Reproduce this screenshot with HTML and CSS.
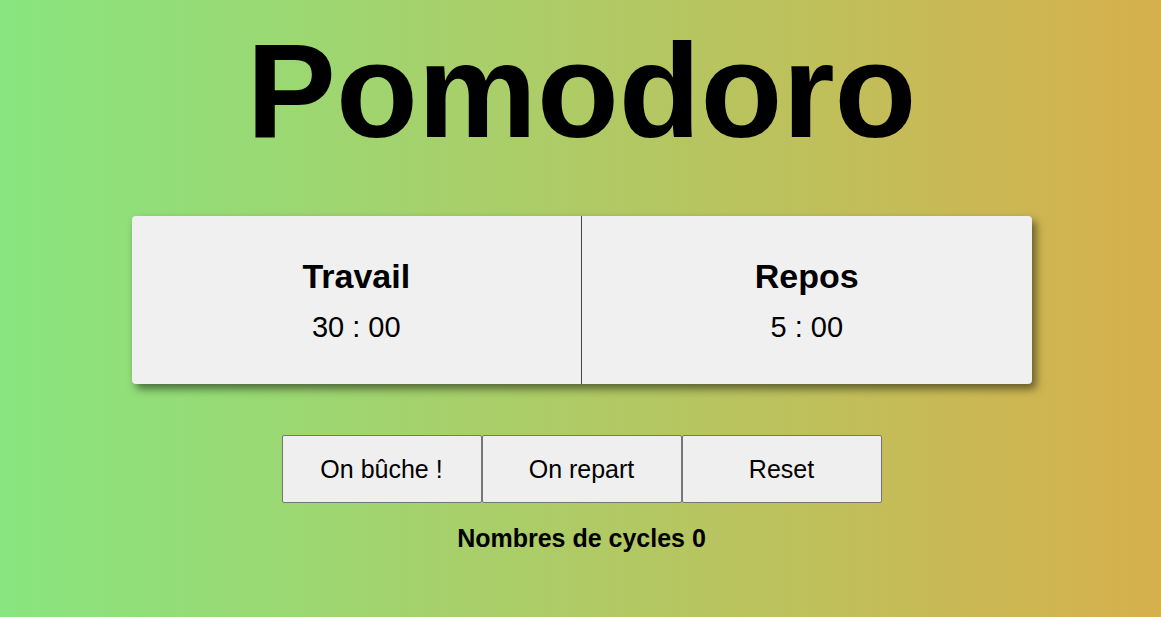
FILE: index.html
```html
<!DOCTYPE html>
<html>
<head>
<title>Pomodoro</title>
<link rel="stylesheet" href="styles.css">
</head>

<body>

<div class="mainContainer">

<h1 class="title">Pomodoro</h1>

<div class="timerCard">
<div class="timerCell timerCellLeft">
<h2 class="timerLabel">Travail</h2>
<div class="timerValue" id="workTime">30 : 00</div>
</div>
<div class="timerCell">
<h2 class="timerLabel">Repos</h2>
<div class="timerValue" id="restTime">5 : 00</div>
</div>
</div>

<div class="buttonRow">
<button class="actionButton" id="start">On bûche !</button>
<button class="actionButton" id="pause">On repart</button>
<button class="actionButton" id="reset">Reset</button>
</div>

<div class="cycles">Nombres de cycles <text id="cycles">0</text></div>

</div>

</body>
</html>
```

FILE: styles.css
```css
html, body {
    height: 100%;
}
body {
    margin: 0;
    background: linear-gradient(to right, #88e57f, #d6b04c);
    font-family: "Liberation Sans", Arial, sans-serif;
    color: #000;
}
.mainContainer {
    display: flex;
    flex-direction: column;
    align-items: center;
    padding-left: 2px;
}
.title {
    margin: 14px 0 0;
    font: bold 134px "Liberation Sans", Arial, sans-serif;
    line-height: normal;
}
.timerCard {
    display: flex;
    width: 900px;
    height: 168px;
    margin-top: 49px;
    background-color: #f0f0f0;
    border-radius: 4px;
    box-shadow: 4px 5px 8px rgba(0, 0, 0, 0.5);
}
.timerCell {
    flex: 1;
    display: flex;
    flex-direction: column;
    align-items: center;
    justify-content: center;
    gap: 15px;
}
.timerCellLeft {
    border-right: 1px solid #444;
}
.timerLabel {
    margin: 0;
    font: bold 34px "Liberation Sans", Arial, sans-serif;
    line-height: normal;
}
.timerValue {
    font-size: 29px;
    line-height: normal;
}
.buttonRow {
    display: flex;
    margin-top: 51px;
}
.actionButton {
    width: 200px;
    height: 68px;
    margin: 0;
    padding: 0;
    background-color: #efefef;
    border: 1px solid #767676;
    border-radius: 2px;
    font: 25px "Liberation Sans", Arial, sans-serif;
    color: #000;
}
.cycles {
    margin-top: 21px;
    font: bold 25px "Liberation Sans", Arial, sans-serif;
    line-height: normal;
}
```
